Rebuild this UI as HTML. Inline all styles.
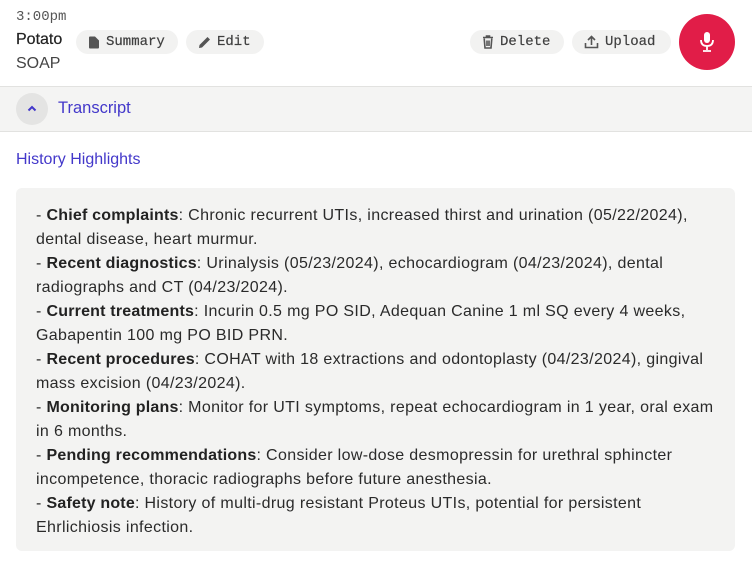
<!DOCTYPE html>
<html><head><meta charset="utf-8"><style>
*{margin:0;padding:0;box-sizing:border-box}
body{width:752px;height:566px;background:#fff;font-family:"Liberation Sans",sans-serif;color:#222;position:relative;overflow:hidden}
.mono{font-family:"Liberation Mono",monospace}
.abs{position:absolute}
.btn{position:absolute;top:30px;height:24px;border-radius:12px;background:#f2f2f1;font-family:"Liberation Mono",monospace;font-size:14px;color:#3f3f3f;display:flex;align-items:center;padding-left:12px;gap:6px;-webkit-text-stroke:0.2px #3f3f3f}
.band{position:absolute;left:0;top:86px;width:752px;height:46px;background:#f4f4f3;border-top:1px solid #e2e2e0;border-bottom:1px solid #e2e2e0}
.box{position:absolute;left:16px;top:188px;width:719px;height:363px;background:#f3f3f2;border-radius:6px;padding:16px 0 0 20px;font-size:16px;letter-spacing:0.35px;line-height:24px;white-space:nowrap;color:#2a2a2a}
b{color:#222;letter-spacing:0.2px}
</style></head><body>
<div class="abs mono" style="left:16px;top:9px;font-size:14px;color:#555">3:00pm</div>
<div class="abs" style="left:16px;top:31px;font-size:16px;color:#222;-webkit-text-stroke:0.2px #222">Potato</div>
<div class="abs" style="left:16px;top:55px;font-size:16px;color:#444">SOAP</div>
<div class="btn" style="left:76px;width:102px"><svg width="12" height="13" viewBox="0 0 12 13"><path d="M1 1.5Q1 0.5 2 0.5H7L11 4.5V11.5Q11 12.5 10 12.5H2Q1 12.5 1 11.5Z" fill="#555"/></svg>Summary</div>
<div class="btn" style="left:186px;width:78px"><svg width="13" height="13" viewBox="0 0 13 13"><path d="M1 12L1.5 9L9.5 1L12 3.5L4 11.5Z" fill="#555"/></svg>Edit</div>
<div class="btn" style="left:470px;width:94px"><svg width="12" height="14" viewBox="0 0 12 14"><path d="M1 2.5H11M4.5 2.5V1H7.5V2.5M2.2 3.5L3 13H9L9.8 3.5M5 5.5V11M7 5.5V11" stroke="#555" stroke-width="1.6" fill="none"/></svg>Delete</div>
<div class="btn" style="left:572px;width:99px"><svg width="15" height="14" viewBox="0 0 15 14"><path d="M1.5 8V12.5H13.5V8M7.5 10V1.5M4 5L7.5 1.5L11 5" stroke="#555" stroke-width="1.6" fill="none"/></svg>Upload</div>
<div class="abs" style="left:679px;top:14px;width:56px;height:56px;border-radius:50%;background:#e11d48"><svg class="abs" style="left:20px;top:17px" width="16" height="22" viewBox="0 0 16 22"><rect x="5" y="1" width="6" height="11" rx="3" fill="#fff"/><path d="M2 9Q2 15 8 15Q14 15 14 9M8 15V19M4 20H12" stroke="#fff" stroke-width="1.8" fill="none"/></svg></div>
<div class="band"></div>
<div class="abs" style="left:16px;top:93px;width:32px;height:32px;border-radius:50%;background:#e4e4e3"><svg class="abs" style="left:11px;top:12px" width="10" height="7" viewBox="0 0 10 7"><path d="M1.5 5.5L5 2L8.5 5.5" stroke="#4338ca" stroke-width="2" fill="none"/></svg></div>
<div class="abs" style="left:58px;top:99px;font-size:16.5px;color:#4338ca">Transcript</div>
<div class="abs" style="left:16px;top:151px;font-size:16px;color:#4338ca">History Highlights</div>
<div class="box">- <b>Chief complaints</b>: Chronic recurrent UTIs, increased thirst and urination (05/22/2024),<br>dental disease, heart murmur.<br>- <b>Recent diagnostics</b>: Urinalysis (05/23/2024), echocardiogram (04/23/2024), dental<br>radiographs and CT (04/23/2024).<br>- <b>Current treatments</b>: Incurin 0.5 mg PO SID, Adequan Canine 1 ml SQ every 4 weeks,<br>Gabapentin 100 mg PO BID PRN.<br>- <b>Recent procedures</b>: COHAT with 18 extractions and odontoplasty (04/23/2024), gingival<br>mass excision (04/23/2024).<br>- <b>Monitoring plans</b>: Monitor for UTI symptoms, repeat echocardiogram in 1 year, oral exam<br>in 6 months.<br>- <b>Pending recommendations</b>: Consider low-dose desmopressin for urethral sphincter<br>incompetence, thoracic radiographs before future anesthesia.<br>- <b>Safety note</b>: History of multi-drug resistant Proteus UTIs, potential for persistent<br>Ehrlichiosis infection.</div>
</body></html>
